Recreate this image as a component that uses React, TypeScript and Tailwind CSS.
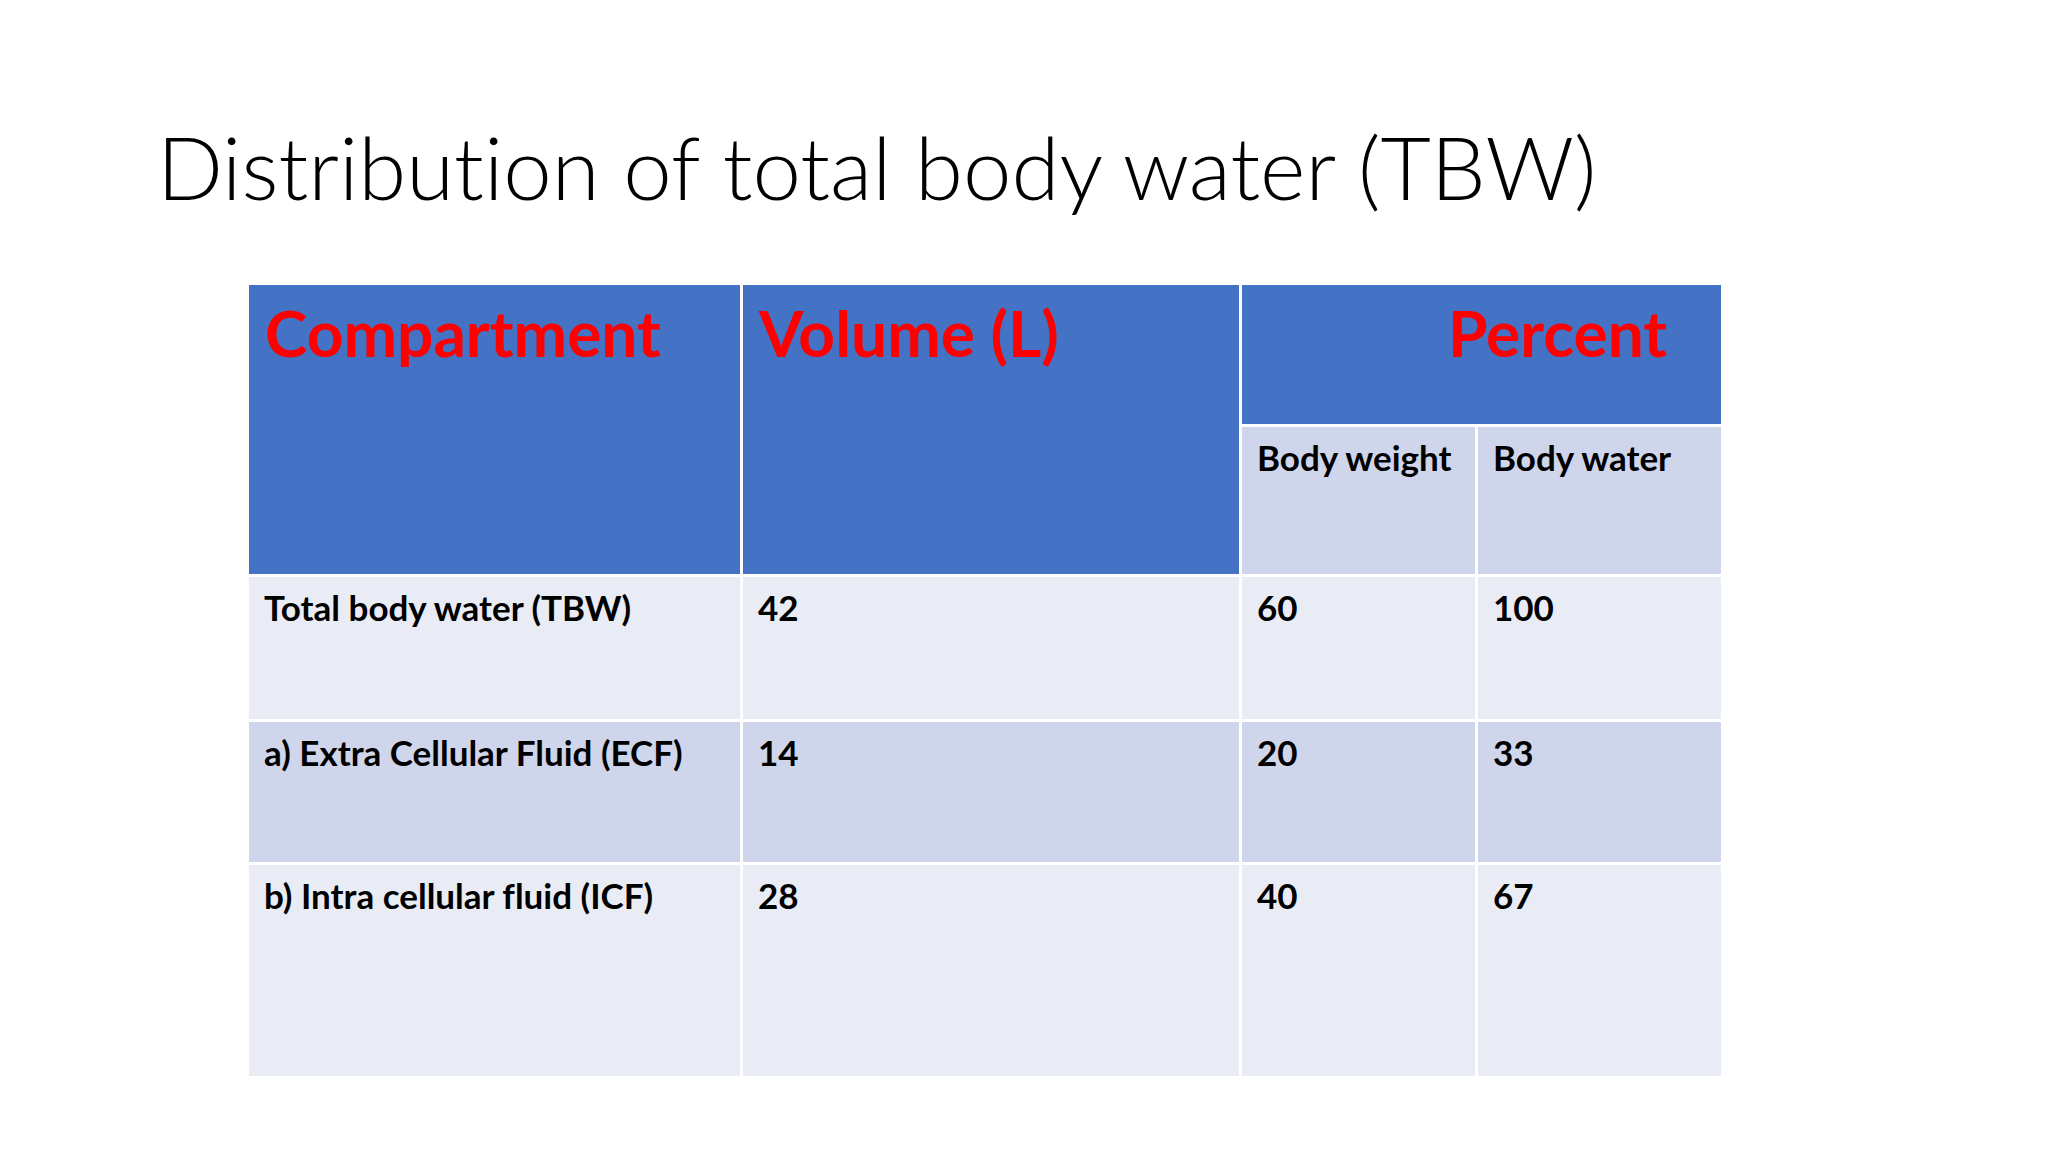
export default function App() {
  const rows = [
    { name: 'Total body water (TBW)', vol: '42', bw: '60', water: '100', bg: 'bg-[#e9ebf5]', h: 'h-[142px]' },
    { name: 'a) Extra Cellular Fluid (ECF)', vol: '14', bw: '20', water: '33', bg: 'bg-[#cfd5ea]', h: 'h-[140px]' },
    { name: 'b) Intra cellular fluid (ICF)', vol: '28', bw: '40', water: '67', bg: 'bg-[#e9ebf5]', h: 'h-[211px]' },
  ];

  return (
    <div className="w-[2048px] h-[1152px] bg-white font-['Lato',sans-serif] overflow-hidden [font-variant-ligatures:none]">
      <h1 className="pl-[157px] pt-[123px] text-[87px] leading-none font-light text-black">
        Distribution of total body water (TBW)
      </h1>

      <div className="ml-[249px] mt-[75px] w-[1472px] grid grid-cols-[491px_496px_233px_243px] gap-[3px] text-black font-bold">
        {/* header */}
        <div className="row-span-2 bg-[#4472c4] pl-[16px] pt-[16px] text-[64px] leading-none text-[#ff0000]">
          Compartment
        </div>
        <div className="row-span-2 bg-[#4472c4] pl-[16px] pt-[16px] text-[64px] leading-none text-[#ff0000]">
          Volume (L)
        </div>
        <div className="col-span-2 h-[139px] bg-[#4472c4] pl-[206px] pt-[16px] text-[64px] leading-none text-[#ff0000]">
          Percent
        </div>
        <div className="h-[147px] bg-[#cfd5ea] pl-[15px] pt-[13px] text-[35px] leading-none">Body weight</div>
        <div className="h-[147px] bg-[#cfd5ea] pl-[15px] pt-[13px] text-[35px] leading-none">Body water</div>

        {rows.map((r) => (
          <>
            <div key={r.name + 'a'} className={`${r.bg} ${r.h} pl-[15px] pt-[13px] text-[35px] leading-none`}>{r.name}</div>
            <div key={r.name + 'b'} className={`${r.bg} ${r.h} pl-[15px] pt-[13px] text-[35px] leading-none`}>{r.vol}</div>
            <div key={r.name + 'c'} className={`${r.bg} ${r.h} pl-[15px] pt-[13px] text-[35px] leading-none`}>{r.bw}</div>
            <div key={r.name + 'd'} className={`${r.bg} ${r.h} pl-[15px] pt-[13px] text-[35px] leading-none`}>{r.water}</div>
          </>
        ))}
      </div>
    </div>
  );
}
